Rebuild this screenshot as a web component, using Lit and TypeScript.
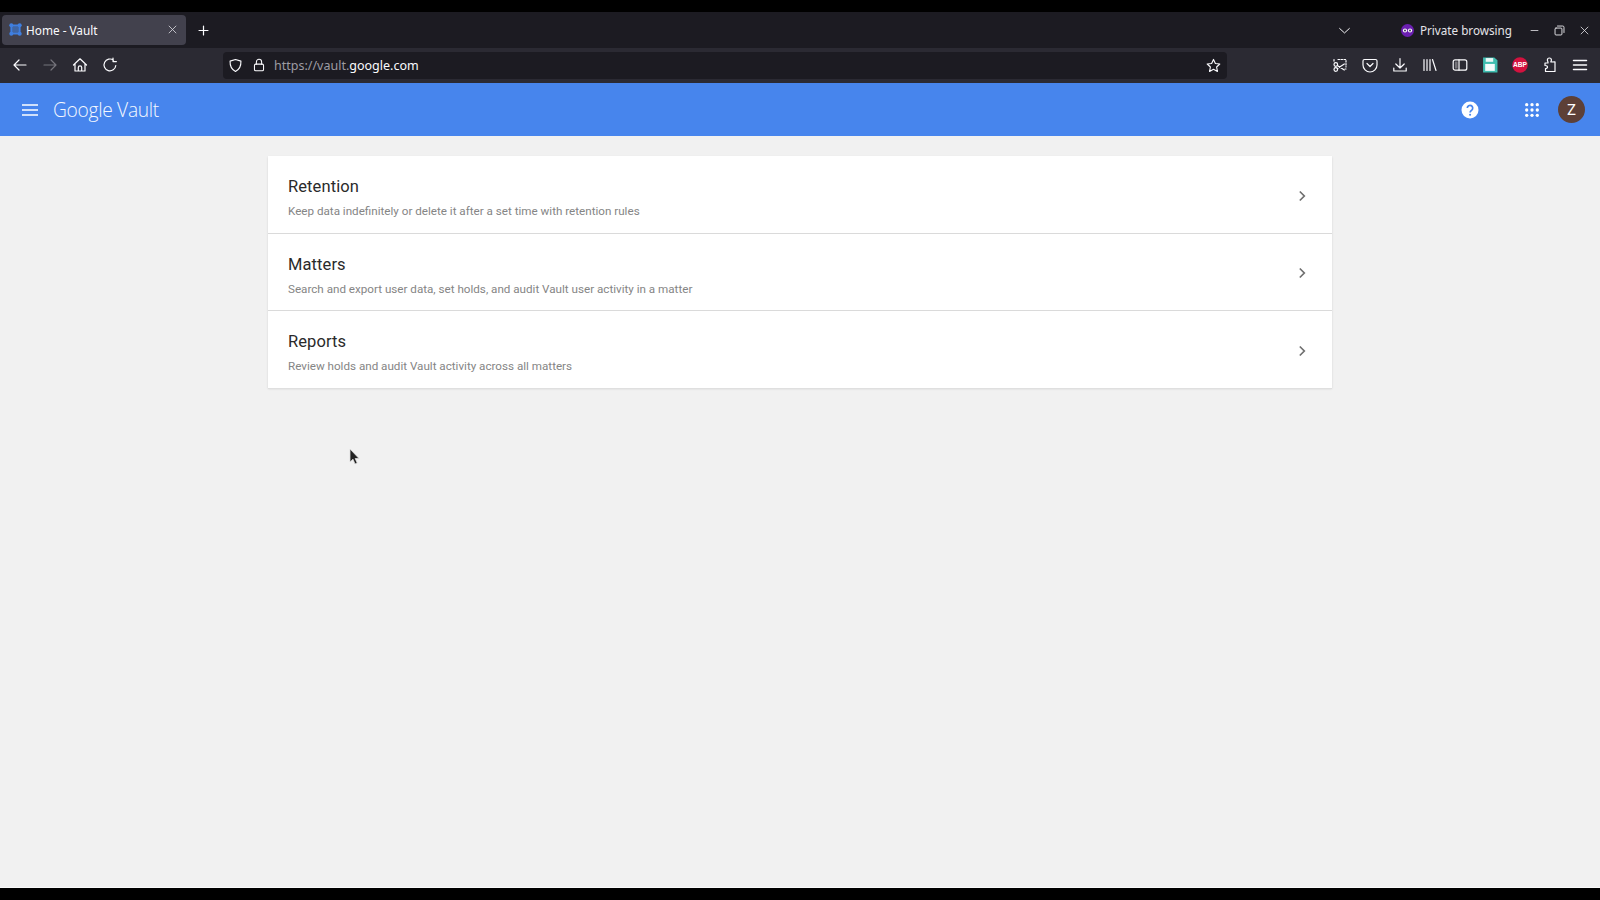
import { LitElement, html, css, svg } from "lit";
import { customElement } from "lit/decorators.js";

const s = (w: number, body: unknown, cls = "ic") => html`<svg class=${cls} width=${w} height=${w} viewBox="0 0 16 16" fill="none" stroke="currentColor" stroke-width="1.2" stroke-linecap="round" stroke-linejoin="round">${body}</svg>`;

const icons = {
  back: svg`<path d="M14 8H2.500M7 3L2 8l5 5"/>`,
  forward: svg`<path d="M2 8h11.500M9 3l5 5-5 5"/>`,
  home: svg`<path d="M1.500 8L8 1.800 14.500 8M3 7v7h10V7M6.300 14v-3.500a1.700 1.700 0 0 1 3.400 0V14"/>`,
  reload: svg`<path d="M13.800 8.500A5.900 5.900 0 1 1 11.500 3.200M11 1v3.600h3.400"/>`,
  shield: svg`<path d="M8 1.600l5.800 1.700c.2 5-1.400 9-5.800 11.100C3.600 12.300 2 8.300 2.200 3.300z"/>`,
  lock: svg`<rect x="2.800" y="7" width="10.400" height="7.500" rx="1.500"/><path d="M5 7V4.500a3 3 0 0 1 6 0V7"/>`,
  star: svg`<path d="M8 1.500l2 4.300 4.700.6-3.400 3.200.9 4.700L8 12l-4.200 2.300.9-4.700L1.300 6.400 6 5.800z"/>`,
  screenshot: svg`<path d="M6 2.500h8v7.500M14 12h-1M2 2.500v2" stroke-dasharray="1.600 1.400"/><circle cx="3.800" cy="12.500" r="1.800"/><circle cx="3.800" cy="7.500" r="1.800"/><path d="M5.300 11.500l7-4.500M5.300 8.500l7 4.500"/>`,
  pocket: svg`<path d="M2.500 2.500h11A1.500 1.500 0 0 1 15 4v4a7 7 0 0 1-14 0V4a1.500 1.500 0 0 1 1.500-1.500zM5 6.500L8 9.500l3-3"/>`,
  download: svg`<path d="M8 1.500v9.500M3.800 7L8 11l4.200-4M1.800 11v3h12.400v-3"/>`,
  library: svg`<path d="M2 2.500v11M5 2.500v11M8 2.500v11M10.500 2.500l3.500 11"/>`,
  sidebar: svg`<rect x="1.200" y="2.800" width="13.600" height="10.400" rx="2"/><path d="M7 2.800v10.400"/><rect x="2.800" y="4.500" width="2.800" height="7" fill="currentColor" stroke="none" opacity=".35"/>`,
  extension: svg`<path d="M3 6h3c.2-1.500-.6-1.800-.6-3a2 2 0 0 1 4 0c0 .8-.4 1.300-.6 2l4.200-.2v9.700H3.500v-3c1.400 0 2-.5 2-1.500S4.900 8.500 3 8.500z"/>`,
  menu: svg`<path d="M1.500 3.500h13M1.500 8h13M1.500 12.500h13" stroke-width="1.500"/>`,
  close: svg`<path d="M3 3l10 10M13 3L3 13"/>`,
  plus: svg`<path d="M8 2.500v11M2.500 8h11" stroke-width="1.500"/>`,
  chevDown: svg`<path d="M2 5.500l6 5.500 6-5.500"/>`,
  minimize: svg`<path d="M3 8h10"/>`,
  restore: svg`<rect x="2.500" y="5" width="8.500" height="8.500" rx="1.200"/><path d="M5.500 2.500h6.500A1.500 1.500 0 0 1 13.500 4v6.500"/>`,
};

const rows = [
  ["Retention", "Keep data indefinitely or delete it after a set time with retention rules"],
  ["Matters", "Search and export user data, set holds, and audit Vault user activity in a matter"],
  ["Reports", "Review holds and audit Vault activity across all matters"],
];

@customElement("app-root")
export class AppRoot extends LitElement {
  static styles = css`
    :host { display: flex; flex-direction: column; width: 1600px; height: 900px; background: #000; overflow: hidden; position: relative; font-family: "Noto Sans", sans-serif; }
    .topgap { height: 12px; flex: none; }
    .tabs { height: 36px; flex: none; background: #1c1b22; display: flex; align-items: center; color: #fbfbfe; padding-left: 2px; }
    .tab { width: 184px; height: 30px; background: #42414d; border-radius: 4px; display: flex; align-items: center; padding: 0 8px 0 7px; box-sizing: border-box; font-size: 11.800px; margin-top: -1px; }
    .tab span { flex: 1; margin-left: 4px; padding-top: 1px; }
    .tab .x { color: #d8d8de; }
    .fav { flex: none; }
    .newtab { margin-left: 11px; }
    .spacer { flex: 1; }
    .private { display: flex; align-items: center; font-size: 11.700px; color: #e4e4e8; margin-left: 50px; gap: 6px; }
    .wc { display: flex; align-items: center; margin-left: 17px; gap: 13px; padding-right: 10px; color: #dedee2; }
    .toolbar { height: 35px; flex: none; background: #2b2a33; display: flex; align-items: center; color: #fbfbfe; padding: 0 0 1px 12px; box-sizing: border-box; }
    .nav { display: flex; gap: 14px; align-items: center; }
    .dim { color: #75747c; }
    .url { margin-left: 105px; width: 1004px; height: 27px; background: #1c1b22; border-radius: 4px; display: flex; align-items: center; box-sizing: border-box; padding: 0 6px 0 5px; font-size: 12.500px; }
    .url .lock { margin-left: 9px; }
    .addr { flex: 1; margin-left: 8px; color: #9c9ba2; }
    .addr b { font-weight: 400; color: #fbfbfe; }
    .tools { display: flex; align-items: center; margin-left: 105px; gap: 14px; }
    .tools svg { flex: none; }
    .bar { height: 53px; flex: none; background: #4785ed; display: flex; align-items: center; color: #fff; padding: 0 15px 0 22px; }
    .logo { margin-left: 15px; font-family: "Open Sans", sans-serif; font-size: 19.200px; font-weight: 300; letter-spacing: -0.300px; color: #f4f8ff; }
    .help { margin-right: 46px; flex: none; }
    .grid { margin-right: 19px; flex: none; }
    .avatar { width: 27px; height: 27px; border-radius: 50%; background: #5d4037; color: #fff; font-size: 15px; display: flex; align-items: center; justify-content: center; font-family: "Roboto", sans-serif; }
    main { flex: none; background: #f1f1f1; border-bottom: 1px solid #fafafa; padding-top: 20px; height: 731px; display: flex; justify-content: center; font-family: "Roboto", sans-serif; }
    .card { width: 1064px; height: 232px; background: #fff; box-shadow: 0 1px 2px rgba(0,0,0,.12); }
    .row { height: 77.500px; box-sizing: border-box; border-bottom: 1.500px solid #dadada; display: flex; align-items: center; padding: 3px 24px 0 20px; }
    .row:last-child { border-bottom-color: #dfdfdf; }
    .txt { flex: 1; padding-top: 4px; }
    .t { font-size: 16.500px; color: #2a2a2a; line-height: 22px; letter-spacing: .1px; }
    .d { font-size: 11.650px; color: #858585; line-height: 16px; margin-top: 5px; }
    .chev { color: #6f6f6f; }
    .cursor { position: absolute; left: 349px; top: 448px; }
  `;

  render() {
    return html`
      <div class="topgap"></div>
      <div class="tabs">
        <div class="tab">
          <svg class="fav" width="13" height="13" viewBox="0 0 14 14" fill="#3f7fe0"><path d="M3 3h8v8H3z" fill="#3f7fe0" opacity=".6"/><path d="M3 2.500h8M3 11.500h8M2.500 3v8M11.500 3v8" stroke="#3f7fe0" stroke-width="2"/><circle cx="2.500" cy="2.500" r="2.200"/><circle cx="11.500" cy="2.500" r="2.200"/><circle cx="2.500" cy="11.500" r="2.200"/><circle cx="11.500" cy="11.500" r="2.200"/></svg>
          <span>Home - Vault</span>
          ${s(11, icons.close, "x")}
        </div>
        ${s(13, icons.plus, "newtab")}
        <div class="spacer"></div>
        ${s(13, icons.chevDown)}
        <div class="private">
          <svg width="13" height="13" viewBox="0 0 13 13"><circle cx="6.500" cy="6.500" r="6.500" fill="#6a1fb0"/><circle cx="4" cy="6.500" r="2.100" fill="#fff"/><circle cx="9" cy="6.500" r="2.100" fill="#fff"/><circle cx="4" cy="6.500" r=".9" fill="#2b1a4a"/><circle cx="9" cy="6.500" r=".9" fill="#2b1a4a"/></svg>
          Private browsing
        </div>
        <div class="wc">
          ${s(11, icons.minimize)}${s(13, icons.restore)}${s(11, icons.close)}
        </div>
      </div>
      <div class="toolbar">
        <div class="nav">
          ${s(16, icons.back)}
          ${s(16, icons.forward, "dim")}
          ${s(16, icons.home)}
          ${s(16, icons.reload)}
        </div>
        <div class="url">
          ${s(15, icons.shield)}
          ${s(14, icons.lock, "lock")}
          <div class="addr">https://vault.<b>google.com</b></div>
          ${s(15, icons.star)}
        </div>
        <div class="tools">
          ${s(16, icons.screenshot)}${s(16, icons.pocket)}${s(16, icons.download)}${s(16, icons.library)}${s(16, icons.sidebar)}
          <svg width="16" height="16" viewBox="0 0 15 15"><path d="M1 .5h10.500L14.500 3v11.500H1z" fill="#3fbdb0"/><rect x="3" y="6.500" width="9" height="6.500" fill="#f4fbfb"/><rect x="3.500" y="1" width="7" height="3.500" fill="#e9f7f6"/></svg>
          <svg width="16" height="16" viewBox="0 0 15 15"><circle cx="7.500" cy="7.500" r="7.300" fill="#d3123f"/><text x="7.500" y="9.800" text-anchor="middle" font-size="6.200" font-weight="700" fill="#fff" font-family="Liberation Sans, sans-serif">ABP</text></svg>
          ${s(16, icons.extension)}${s(16, icons.menu)}
        </div>
      </div>
      <div class="bar">
        <svg width="16" height="16" viewBox="0 0 16 16" fill="none" stroke="#fff" stroke-width="1.600"><path d="M0 3h16M0 8h16M0 13h16"/></svg>
        <div class="logo">Google Vault</div>
        <div class="spacer"></div>
        <svg class="help" width="18" height="18" viewBox="0 0 18 18"><circle cx="9" cy="9" r="8.500" fill="#fff"/><path d="M6.300 7a2.700 2.700 0 1 1 4.300 2.200c-1 .7-1.500 1.200-1.500 2.300" fill="none" stroke="#4785ed" stroke-width="1.700"/><circle cx="9.100" cy="13.700" r="1.050" fill="#4785ed"/></svg>
        <svg class="grid" width="14" height="14" viewBox="0 0 14 14" fill="#fff">
          ${[1.7, 7, 12.3].flatMap((y) => [1.7, 7, 12.3].map((x) => svg`<circle cx=${x} cy=${y} r="1.650"/>`))}
        </svg>
        <div class="avatar">Z</div>
      </div>
      <main>
        <div class="card">
          ${rows.map(([t, d]) => html`
            <div class="row">
              <div class="txt"><div class="t">${t}</div><div class="d">${d}</div></div>
              <svg class="chev" width="12" height="12" viewBox="0 0 12 12" fill="none" stroke="currentColor" stroke-width="1.700"><path d="M3.800 1.500L8.300 6l-4.500 4.500"/></svg>
            </div>`)}
        </div>
      </main>
      <svg class="cursor" width="12" height="18" viewBox="0 0 12 18"><path d="M1 1v13l3-2.800 2 4.800 2.200-.9-2-4.600H10z" fill="#222" stroke="#ddd" stroke-width=".8"/></svg>
    `;
  }
}
